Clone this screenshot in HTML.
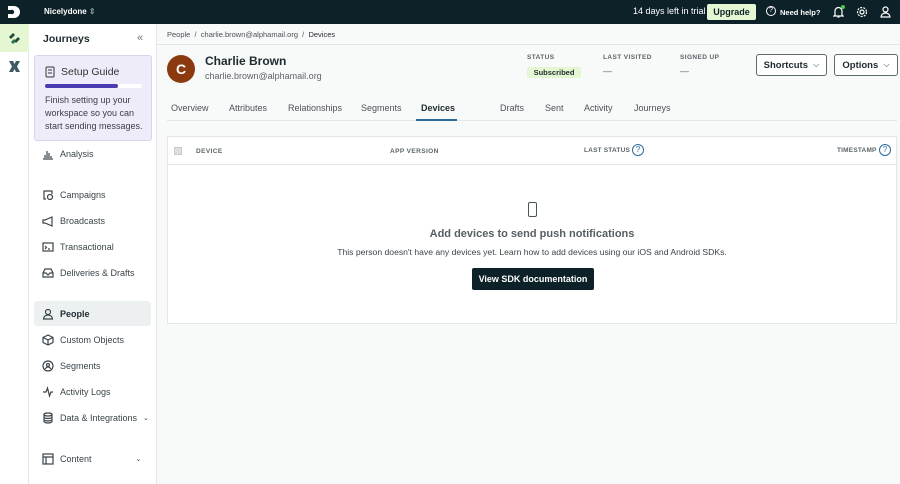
<!DOCTYPE html>
<html><head><style>
*{box-sizing:border-box;margin:0;padding:0}
body{width:900px;height:484px;overflow:hidden;font-family:"Liberation Sans",sans-serif;background:#f8f9f9;position:relative;color:#1d2a30}
.abs{position:absolute}
.top{left:0;top:0;width:900px;height:24px;background:#0d2228;color:#fff}
.rail{left:0;top:24px;width:29px;height:460px;background:#fff;border-right:1px solid #e3e6e8}
.side{left:29px;top:24px;width:128px;height:460px;background:#fff;border-right:1px solid #e3e6e8}
.nav{position:absolute;left:5px;width:117px;height:25px;font-size:9px;color:#3a4449;display:flex;align-items:center;padding-left:8px;border-radius:3px}
.nav svg{width:12px;height:12px;margin-right:6px;stroke:#3a4449;fill:none;stroke-width:1.2}
.tab{position:absolute;top:103px;font-size:9px;color:#4a5458}
.lbl{font-size:6.5px;letter-spacing:.4px;color:#5b6469;font-weight:bold}
.btn{background:#fff;border:1px solid #5f6a6e;border-radius:3px;font-size:9.5px;font-weight:bold;display:flex;align-items:center;justify-content:center}
</style></head><body>
<div class="abs top">
 <svg class="abs" style="left:7px;top:5px" width="14" height="14" viewBox="0 0 14 14"><path d="M1 1h6a6 6 0 010 12H1z" fill="#fff"/><circle cx="5" cy="7" r="2.2" fill="#0d2228"/><rect x="1" y="5" width="3" height="4" fill="#0d2228"/></svg>
 <div class="abs" style="left:44px;top:7px;font-size:8px;font-weight:bold">Nicelydone <span style="color:#8a9599">⇕</span></div>
 <div class="abs" style="left:633px;top:6px;font-size:9px">14 days left in trial</div>
 <div class="abs" style="left:707px;top:4px;width:49px;height:16px;background:#e4f7d2;color:#0d2228;border-radius:2px;font-size:9px;font-weight:bold;text-align:center;line-height:16px">Upgrade</div>
 <div class="abs" style="left:766px;top:6px;width:10px;height:10px;border:1.2px solid #fff;border-radius:50%;font-size:7px;text-align:center;line-height:8px">?</div>
 <div class="abs" style="left:780px;top:8px;font-size:7.5px;font-weight:bold">Need help?</div>
 <svg class="abs" style="left:833px;top:6px" width="11" height="12" viewBox="0 0 11 12" fill="none" stroke="#fff" stroke-width="1.2"><path d="M2 9V5a3.5 3.5 0 017 0v4l1 1H1zM4.5 11h2"/></svg>
 <div class="abs" style="left:841px;top:5px;width:4px;height:4px;background:#4cc74a;border-radius:50%"></div>
 <svg class="abs" style="left:856px;top:6px" width="12" height="12" viewBox="0 0 12 12" fill="none" stroke="#fff" stroke-width="1.2"><circle cx="6" cy="6" r="2"/><circle cx="6" cy="6" r="4.5" stroke-dasharray="2 1.2"/></svg>
 <svg class="abs" style="left:880px;top:6px" width="11" height="12" viewBox="0 0 11 12" fill="none" stroke="#fff" stroke-width="1.2"><circle cx="5.5" cy="3.5" r="2.5"/><path d="M1 11a4.5 4 0 019 0z"/></svg>
</div>
<div class="abs rail">
 <div class="abs" style="left:0;top:0;width:29px;height:28px;background:#e4f7d2"></div>
 <svg class="abs" style="left:8px;top:8px" width="13" height="12" viewBox="0 0 13 12"><path d="M1 5l4-4 2 2-4 4zM6 9l4-4 2 2-4 4z" fill="#1e4b3a"/><path d="M3 10l3-3 2 2-3 3z" fill="#2d6c4e"/></svg>
 <svg class="abs" style="left:8px;top:36px" width="13" height="13" viewBox="0 0 13 13" fill="#3e5a5f"><path d="M1 1h4l1.5 3L8 1h4l-3 5.5 3 5.5H8L6.5 9 5 12H1l3-5.5z"/></svg>
</div>
<div class="abs side">
 <div class="abs" style="left:14px;top:9px;font-size:10.5px;font-weight:bold">Journeys</div>
 <div class="abs" style="left:108px;top:8px;font-size:11px;color:#6a7478">«</div>
 <div class="abs" style="left:5px;top:31px;width:118px;height:86px;background:#eeecf9;border:1px solid #d8d4ee;border-radius:3px">
  <svg class="abs" style="left:10px;top:10px" width="10" height="12" viewBox="0 0 10 12" fill="none" stroke="#333" stroke-width="1"><rect x="1" y="1" width="8" height="10" rx="1"/><path d="M3 4h4M3 7h4"/></svg>
  <div class="abs" style="left:26px;top:10px;font-size:10.5px;color:#333">Setup Guide</div>
  <div class="abs" style="left:10px;top:28px;width:97px;height:4px;background:#fff;border-radius:2px"><div style="width:73px;height:4px;background:#4a3cb0;border-radius:2px"></div></div>
  <div class="abs" style="left:10px;top:38px;width:102px;font-size:9px;line-height:12.8px;color:#3a3f44">Finish setting up your workspace so you can start sending messages.</div>
 </div>
 <div class="nav" style="top:117px"><svg viewBox="0 0 12 12"><path d="M1 11h10M3 10V7M5 10V3M7 10V5M9 10V8"/></svg>Analysis</div>
 <div class="nav" style="top:158px"><svg viewBox="0 0 12 12"><path d="M4 10H2V2h8v3"/><circle cx="8" cy="8" r="2.5"/></svg>Campaigns</div>
 <div class="nav" style="top:184px"><svg viewBox="0 0 12 12"><path d="M1 5v3h2l7 3V2L3 5z"/></svg>Broadcasts</div>
 <div class="nav" style="top:210px"><svg viewBox="0 0 12 12"><rect x="1" y="2" width="10" height="8"/><path d="M3 5l1.5 1.5L3 8M6 8h2"/></svg>Transactional</div>
 <div class="nav" style="top:236px"><svg viewBox="0 0 12 12"><path d="M1 6l2-4h6l2 4v4H1zM1 6h3l2 2 2-2h3"/></svg>Deliveries &amp; Drafts</div>
 <div class="nav" style="top:277px;background:#edf0f1;font-weight:bold;color:#1d2a30"><svg viewBox="0 0 12 12"><circle cx="6" cy="4" r="2.5"/><path d="M1.5 11a4.5 4 0 019 0z"/></svg>People</div>
 <div class="nav" style="top:303px"><svg viewBox="0 0 12 12"><path d="M6 1l5 2.5v5L6 11 1 8.5v-5zM1 3.5L6 6l5-2.5M6 6v5"/></svg>Custom Objects</div>
 <div class="nav" style="top:329px"><svg viewBox="0 0 12 12"><circle cx="6" cy="6" r="5"/><circle cx="6" cy="5" r="1.5"/><path d="M3.5 9a2.5 2 0 015 0"/></svg>Segments</div>
 <div class="nav" style="top:355px"><svg viewBox="0 0 12 12"><path d="M1 6h3l1.5-4 2 8L9 6h2"/></svg>Activity Logs</div>
 <div class="nav" style="top:381px"><svg viewBox="0 0 12 12"><ellipse cx="6" cy="2.5" rx="4" ry="1.5"/><path d="M2 2.5v7c0 .8 1.8 1.5 4 1.5s4-.7 4-1.5v-7M2 5c0 .8 1.8 1.5 4 1.5S10 5.8 10 5M2 7.5c0 .8 1.8 1.5 4 1.5s4-.7 4-1.5"/></svg>Data &amp; Integrations <span style="margin-left:6px;font-size:7px">⌄</span></div>
 <div class="nav" style="top:422px"><svg viewBox="0 0 12 12"><rect x="1" y="1" width="10" height="10"/><path d="M1 4h10M4 4v7"/></svg>Content<span style="margin-left:44px;font-size:7px">⌄</span></div>
</div>
<div class="abs" style="left:157px;top:24px;width:743px;height:21px;border-bottom:1px solid #e3e6e8;font-size:7.5px;color:#4a5458;padding:6px 0 0 10px">People &nbsp;/&nbsp; charlie.brown@alphamail.org &nbsp;/&nbsp; <span style="color:#1d2a30">Devices</span></div>
<div class="abs" style="left:167px;top:55px;width:28px;height:28px;border-radius:50%;background:#8b3a0f;color:#fff;font-size:14px;font-weight:bold;text-align:center;line-height:28px">C</div>
<div class="abs" style="left:205px;top:54px;font-size:12px;font-weight:bold">Charlie Brown</div>
<div class="abs" style="left:205px;top:71px;font-size:9px;color:#5b6469">charlie.brown@alphamail.org</div>
<div class="abs lbl" style="left:527px;top:54px">STATUS</div>
<div class="abs" style="left:527px;top:67px;width:54px;height:11px;background:#e4f7d2;font-size:7.5px;font-weight:bold;text-align:center;line-height:11px;border-radius:2px">Subscribed</div>
<div class="abs lbl" style="left:603px;top:54px">LAST VISITED</div>
<div class="abs" style="left:603px;top:66px;font-size:9px;color:#5b6469">—</div>
<div class="abs lbl" style="left:680px;top:54px">SIGNED UP</div>
<div class="abs" style="left:680px;top:66px;font-size:9px;color:#5b6469">—</div>
<div class="abs btn" style="left:756px;top:54px;width:71px;height:22px">Shortcuts&nbsp;&nbsp;<span style="font-weight:normal;font-size:8px">⌵</span></div>
<div class="abs btn" style="left:834px;top:54px;width:64px;height:22px">Options&nbsp;&nbsp;<span style="font-weight:normal;font-size:8px">⌵</span></div>
<div class="abs" style="left:167px;top:120px;width:730px;height:1px;background:#e3e6e8"></div>
<div class="tab" style="left:171px">Overview</div>
<div class="tab" style="left:229px">Attributes</div>
<div class="tab" style="left:288px">Relationships</div>
<div class="tab" style="left:361px">Segments</div>
<div class="tab" style="left:421px;color:#1d2a30;font-weight:bold">Devices</div>
<div class="abs" style="left:416px;top:119px;width:41px;height:2px;background:#2b6c9c"></div>
<div class="tab" style="left:500px">Drafts</div>
<div class="tab" style="left:545px">Sent</div>
<div class="tab" style="left:584px">Activity</div>
<div class="tab" style="left:634px">Journeys</div>
<div class="abs" style="left:167px;top:136px;width:730px;height:188px;background:#fff;border:1px solid #e3e6e8;border-radius:2px">
 <div class="abs" style="left:0;top:0;width:728px;height:28px;border-bottom:1px solid #e3e6e8"></div>
 <div class="abs" style="left:6px;top:10px;width:8px;height:8px;background:#dcdfe0;border:1px solid #c8cccd"></div>
 <div class="abs lbl" style="left:28px;top:11px">DEVICE</div>
 <div class="abs lbl" style="left:222px;top:11px">APP VERSION</div>
 <div class="abs lbl" style="left:416px;top:10px;letter-spacing:.2px">LAST STATUS</div>
 <div class="abs" style="left:464px;top:7px;width:12px;height:12px;border:1.2px solid #2b6c9c;border-radius:50%;font-size:8px;color:#2b6c9c;text-align:center;line-height:10px">?</div>
 <div class="abs lbl" style="left:669px;top:10px;letter-spacing:.2px">TIMESTAMP</div>
 <div class="abs" style="left:711px;top:7px;width:12px;height:12px;border:1.2px solid #2b6c9c;border-radius:50%;font-size:8px;color:#2b6c9c;text-align:center;line-height:10px">?</div>
 <div class="abs" style="left:360px;top:65px;width:9px;height:15px;border:1.3px solid #4a5458;border-radius:2px"></div>
 <div class="abs" style="left:0;top:91px;width:728px;text-align:center;font-size:11px;font-weight:bold;color:#555e62">Add devices to send push notifications</div>
 <div class="abs" style="left:0;top:110px;width:728px;text-align:center;font-size:8.6px;color:#3a4449">This person doesn't have any devices yet. Learn how to add devices using our iOS and Android SDKs.</div>
 <div class="abs" style="left:304px;top:131px;width:122px;height:22px;background:#0d2228;color:#fff;border-radius:2px;font-size:9px;font-weight:bold;text-align:center;line-height:22px">View SDK documentation</div>
</div>
</body></html>
